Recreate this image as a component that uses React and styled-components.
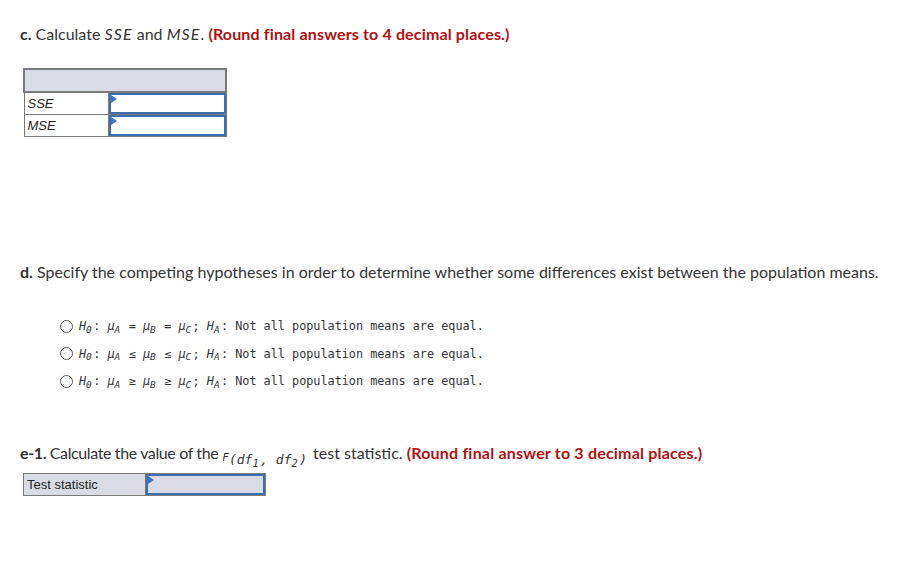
import React from "react";
import styled, { createGlobalStyle } from "styled-components";

const Global = createGlobalStyle`
  html, body { margin: 0; padding: 0; background: #fff; }
  body { font-family: "Lato", "Liberation Sans", sans-serif; color: #333; }
`;

const Page = styled.div`
  padding: 25px 0 0 20px;
  width: 887px;
  display: flex;
  flex-direction: column;
  align-items: flex-start;
`;

const Prompt = styled.div`
  font-size: 16px;
  line-height: 18px;
  color: #333;
  white-space: nowrap;
  margin-top: ${(p) => p.$mt || 0}px;
`;

const Lead = styled.span`
  letter-spacing: ${(p) => p.$ls || 0}px;
`;

const Label = styled.b`
  font-weight: 700;
`;

const Term = styled.i`
  font-style: italic;
  letter-spacing: 1.1px;
`;

const Red = styled.b`
  color: #b30f0f;
  font-weight: 700;
  letter-spacing: ${(p) => p.$ls || 0}px;
`;

const Table = styled.table`
  border-collapse: collapse;
  margin: ${(p) => p.$m};
  font-family: "Liberation Sans", Arial, sans-serif;
  font-size: 13px;
  color: #222;
`;

const Col = styled.col`
  width: ${(p) => p.$w}px;
`;

const HeadCell = styled.td`
  height: 21px;
  background: #d9dce5;
  border: 2px solid #7a7a7a;
  padding: 0;
`;

const LabelCell = styled.td`
  height: 21px;
  border: 1px solid #7a7a7a;
  padding: 0 0 0 3px;
  font-style: ${(p) => (p.$italic ? "italic" : "normal")};
  background: ${(p) => p.$bg || "#fff"};
`;

const InputCell = styled.td`
  padding: 0;
  border: 1px solid #7a7a7a;
  background: ${(p) => p.$bg || "#fff"};
`;

const InputBox = styled.div`
  height: 21px;
  border: 2px solid #3d6fb0;
  box-sizing: border-box;
  position: relative;
  &::before {
    content: "";
    position: absolute;
    left: 0;
    top: 0;
    border-top: 4px solid transparent;
    border-bottom: 4px solid transparent;
    border-left: 6px solid #3d73c0;
  }
`;

const Options = styled.div`
  display: flex;
  flex-direction: column;
  gap: 9.5px;
  margin: 36px 0 0 40px;
`;

const Option = styled.label`
  display: flex;
  align-items: center;
  height: 18px;
`;

const OptionText = styled.span`
  font-family: "DejaVu Sans Mono", monospace;
  font-size: 11.8px;
  color: #333;
  white-space: pre;
`;

const Radio = styled.span`
  width: 11px;
  height: 11px;
  border: 1px solid #555;
  border-radius: 50%;
  margin-right: 6px;
  flex: none;
`;

const I = styled.i`
  font-style: italic;
`;

const Sub = styled.span`
  display: inline-block;
  width: 0.75em;
  font-size: 0.8em;
  font-style: italic;
  position: relative;
  top: 0.3em;
`;

const MathF = styled.span`
  font-family: "DejaVu Sans Mono", monospace;
  font-size: 11px;
  font-style: italic;
  margin: 0 6px 0 4px;
  position: relative;
  top: 2px;
`;

const MathSub = styled.span`
  font-size: 13px;
  position: relative;
  top: 3px;
`;

const hyps = ["=", "≤", "≥"];

export default function App() {
  return (
    <>
      <Global />
      <Page>
        <Prompt>
          <Label>c.</Label> Calculate <Term>SSE</Term> and <Term>MSE</Term>.{" "}
          <Red $ls={0.15}>(Round final answers to 4 decimal places.)</Red>
        </Prompt>
        <Table $m="25px 0 0 3px">
          <colgroup>
            <Col $w={84} />
            <Col $w={118} />
          </colgroup>
          <tbody>
            <tr>
              <HeadCell colSpan={2} />
            </tr>
            <tr>
              <LabelCell $italic>SSE</LabelCell>
              <InputCell><InputBox /></InputCell>
            </tr>
            <tr>
              <LabelCell $italic>MSE</LabelCell>
              <InputCell><InputBox /></InputCell>
            </tr>
          </tbody>
        </Table>
        <Prompt $mt={126}>
          <Label>d.</Label> Specify the competing hypotheses in order to determine whether some differences exist between the population means.
        </Prompt>
        <Options>
          {hyps.map((op, i) => (
            <Option key={i}>
              <Radio />
              <OptionText>
                <I>H</I><Sub>0</Sub>{": "}<I>μ</I><Sub>A</Sub>{` ${op} `}<I>μ</I><Sub>B</Sub>{` ${op} `}<I>μ</I><Sub>C</Sub>{"; "}<I>H</I><Sub>A</Sub>{": Not all population means are equal."}
              </OptionText>
            </Option>
          ))}
        </Options>
        <Prompt $mt={54}>
          <Lead $ls={-0.38}>
            <Label>e-1.</Label> Calculate the value of the
          </Lead>
          <MathF>F<MathSub>(df<Sub>1</Sub>, df<Sub>2</Sub>)</MathSub></MathF>
          test statistic. <Red $ls={0.2}>(Round final answer to 3 decimal places.)</Red>
        </Prompt>
        <Table $m="8px 0 0 3px">
          <colgroup>
            <Col $w={122} />
            <Col $w={120} />
          </colgroup>
          <tbody>
            <tr>
              <LabelCell $bg="#d9dce5">Test statistic</LabelCell>
              <InputCell $bg="#d9dce5"><InputBox /></InputCell>
            </tr>
          </tbody>
        </Table>
      </Page>
    </>
  );
}
